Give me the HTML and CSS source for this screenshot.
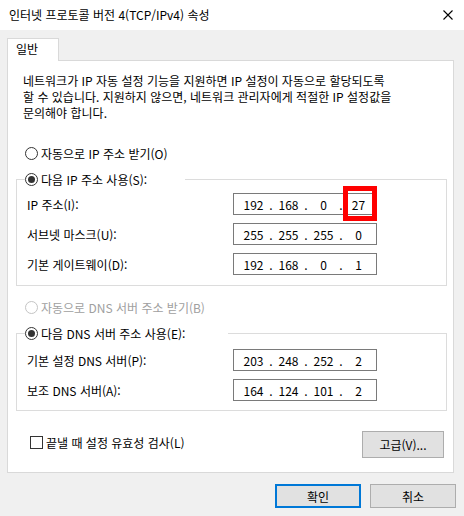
FILE: index.html
```html
<!DOCTYPE html>
<html lang="ko">
<head>
<meta charset="utf-8">
<title>인터넷 프로토콜 버전 4(TCP/IPv4) 속성</title>
<link rel="stylesheet" href="styles.css">
</head>
<body>
<div class="window">
  <div class="titlebar">
    <span class="title">인터넷 프로토콜 버전 4(TCP/IPv4) 속성</span>
    <svg class="close" width="10" height="10" viewBox="0 0 10 10"><path d="M0.5 0.5 L9.5 9.5 M9.5 0.5 L0.5 9.5" stroke="#000" stroke-width="1.1" fill="none"/></svg>
  </div>
  <div class="dialog">
    <div class="tab">일반</div>
    <div class="panel">
      <p class="intro">네트워크가 IP 자동 설정 기능을 지원하면 IP 설정이 자동으로 할당되도록<br>할 수 있습니다. 지원하지 않으면, 네트워크 관리자에게 적절한 IP 설정값을<br>문의해야 합니다.</p>

      <div class="option first"><span class="radio"></span><span>자동으로 IP 주소 받기(O)</span></div>
      <fieldset class="group group-ip">
        <legend class="legend legend-ip"><span class="radio checked"></span><span>다음 IP 주소 사용(S):</span></legend>
        <div class="rows rows-ip">
          <div class="row"><span class="label">IP 주소(I):</span>
            <div class="ipfield"><span class="oct">192</span><span class="dot">.</span><span class="oct">168</span><span class="dot">.</span><span class="oct">0</span><span class="dot">.</span><span class="oct">27</span><span class="highlight"></span></div>
          </div>
          <div class="row"><span class="label">서브넷 마스크(U):</span>
            <div class="ipfield"><span class="oct">255</span><span class="dot">.</span><span class="oct">255</span><span class="dot">.</span><span class="oct">255</span><span class="dot">.</span><span class="oct">0</span></div>
          </div>
          <div class="row"><span class="label">기본 게이트웨이(D):</span>
            <div class="ipfield"><span class="oct">192</span><span class="dot">.</span><span class="oct">168</span><span class="dot">.</span><span class="oct">0</span><span class="dot">.</span><span class="oct">1</span></div>
          </div>
        </div>
      </fieldset>

      <div class="option second disabled"><span class="radio"></span><span>자동으로 DNS 서버 주소 받기(B)</span></div>
      <fieldset class="group group-dns">
        <legend class="legend legend-dns"><span class="radio checked"></span><span>다음 DNS 서버 주소 사용(E):</span></legend>
        <div class="rows rows-dns">
          <div class="row"><span class="label">기본 설정 DNS 서버(P):</span>
            <div class="ipfield"><span class="oct">203</span><span class="dot">.</span><span class="oct">248</span><span class="dot">.</span><span class="oct">252</span><span class="dot">.</span><span class="oct">2</span></div>
          </div>
          <div class="row"><span class="label">보조 DNS 서버(A):</span>
            <div class="ipfield"><span class="oct">164</span><span class="dot">.</span><span class="oct">124</span><span class="dot">.</span><span class="oct">101</span><span class="dot">.</span><span class="oct">2</span></div>
          </div>
        </div>
      </fieldset>

      <div class="bottom">
        <div class="check"><span class="box"></span><span>끝낼 때 설정 유효성 검사(L)</span></div>
        <button class="btn btn-adv">고급(V)...</button>
      </div>
    </div>
    <div class="footer">
      <button class="btn btn-foot btn-default">확인</button>
      <button class="btn btn-foot">취소</button>
    </div>
  </div>
</div>
</body>
</html>
```
FILE: styles.css
```css
* { box-sizing: border-box; }
html, body { margin: 0; padding: 0; }
body {
  width: 464px;
  height: 516px;
  background: #f0f0f0;
  font-family: "Noto Sans CJK KR", "Noto Sans", sans-serif;
  font-size: 12px;
  color: #000;
  overflow: hidden;
}
.titlebar {
  height: 30px;
  background: #fff;
  display: flex;
  align-items: center;
  justify-content: space-between;
  padding: 0 11px 0 9px;
}
.title { line-height: 30px; }
.close { display: block; margin-top: -1px; }

.dialog { padding: 8px 0 0 7px; }
.tab {
  position: relative;
  z-index: 1;
  width: 52px;
  height: 23px;
  margin-bottom: -1px;
  background: #fff;
  border: 1px solid #d9d9d9;
  border-bottom: none;
  padding-left: 8px;
  line-height: 19px;
}
.panel {
  width: 447px;
  background: #fff;
  border: 1px solid #d9d9d9;
  padding: 12px 0 14px 0;
}
.intro {
  margin: 0 0 0 15px;
  line-height: 16px;
  white-space: nowrap;
}
.option, .legend, .check {
  display: flex;
  align-items: center;
  height: 16px;
  gap: 3px;
  white-space: nowrap;
}
.option { margin-left: 17px; }
.option.first { margin-top: 24px; }
.option.second { margin-top: 13px; }
.disabled { color: #a0a0a0; }
.radio {
  flex: 0 0 13px;
  width: 13px;
  height: 13px;
  border: 1px solid #333;
  border-radius: 50%;
  background: #fff;
  display: flex;
  align-items: center;
  justify-content: center;
}
.disabled .radio { border-color: #c4c4c4; }
.radio.checked::after {
  content: "";
  width: 7px;
  height: 7px;
  border-radius: 50%;
  background: #333;
}
.group {
  width: 431px;
  min-width: 0;
  margin: 10px 0 0 8px;
  padding: 0;
  border: 1px solid #dcdcdc;
}
.legend {
  padding: 0;
  margin-left: 8px;
  background: #fff;
}
.legend-ip { width: 160px; }
.legend-dns { width: 203px; }
.rows {
  display: flex;
  flex-direction: column;
  gap: 8px;
  padding-left: 10px;
}
.rows-ip { padding-top: 6px; padding-bottom: 10px; }
.rows-dns { padding-top: 8px; padding-bottom: 9px; }
.row {
  display: flex;
  align-items: center;
  height: 22px;
}
.label { flex: 0 0 206px; white-space: nowrap; }
.ipfield {
  position: relative;
  width: 144px;
  height: 22px;
  border: 1px solid #7a7a7a;
  background: #fff;
  display: flex;
  align-items: center;
  padding-left: 8px;
}
.oct { width: 23px; text-align: center; }
.dot { width: 12px; text-align: center; }
.highlight {
  position: absolute;
  left: 109px;
  top: -8px;
  width: 34px;
  height: 35px;
  border: 5px solid #ff0000;
}
.bottom {
  display: flex;
  justify-content: space-between;
  align-items: flex-start;
  margin-top: 20px;
  padding-left: 22px;
  padding-right: 9px;
}
.check { margin-top: 3px; }
.box {
  flex: 0 0 13px;
  width: 13px;
  height: 13px;
  border: 1px solid #333;
  background: #fff;
}
.btn {
  font-family: inherit;
  font-size: 12px;
  color: #000;
  background: #e1e1e1;
  border: 1px solid #adadad;
  padding: 0;
  margin: 0;
}
.btn-adv { width: 82px; height: 27px; }
.footer {
  display: flex;
  justify-content: flex-end;
  gap: 9px;
  margin-top: 11px;
  padding-right: 8px;
}
.btn-foot { width: 86px; height: 24px; }
.btn-default { border: 2px solid #0078d7; }
```
